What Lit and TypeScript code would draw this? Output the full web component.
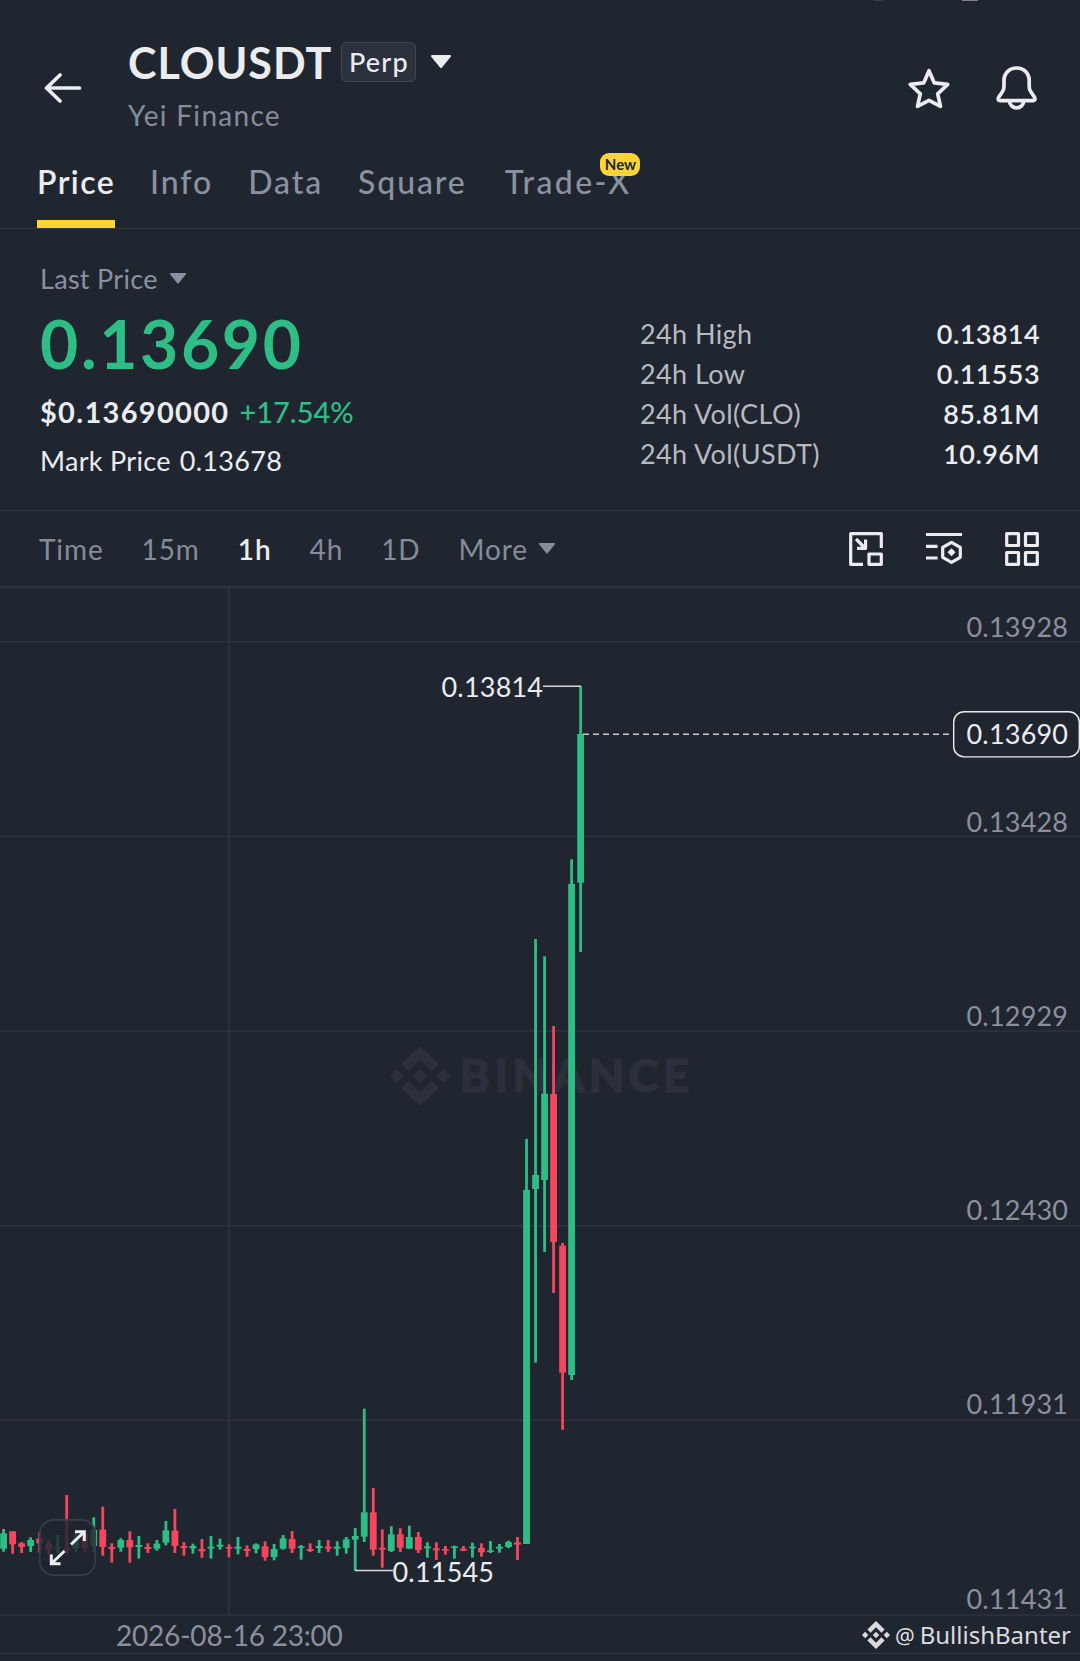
import { LitElement, css, html, svg } from 'lit'
import { customElement, property } from 'lit/decorators.js'

const logo = svg`<path d="M38.73 53.2l24.59-24.58 24.6 24.6 14.3-14.31L63.32 0l-38.9 38.9zM0 63.31l14.3-14.31 14.31 14.31-14.31 14.3zM38.73 73.41l24.59 24.59 24.6-24.6 14.31 14.29-38.9 38.91-38.91-38.88zM98 63.31l14.3-14.31 14.31 14.3-14.31 14.32zM77.83 63.3L63.32 48.78 48.81 63.28l14.51 14.5z" />`

type Candle = [dir: 'up' | 'down', high: number, low: number, top: number, bottom: number]

// wick and body edges in thirds of a pixel from BASE
const BASE = 814
const STEP = 9.016
const candles: Candle[] = [
  ['up', 387, 455, 400, 446],
  ['down', 394, 461, 394, 433],
  ['down', 426, 459, 430, 441],
  ['up', 412, 456, 420, 438],
  ['down', 397, 458, 416, 430],
  ['down', 418, 465, 432, 448],
  ['up', 405, 459, 440, 445],
  ['down', 285, 461, 444, 452],
  ['up', 400, 458, 415, 446],
  ['down', 390, 457, 402, 444],
  ['up', 352, 456, 390, 438],
  ['down', 320, 467, 389, 441],
  ['down', 430, 488, 441, 447],
  ['up', 415, 455, 420, 443],
  ['down', 394, 488, 420, 442],
  ['up', 408, 476, 435, 441],
  ['down', 430, 459, 441, 447],
  ['up', 420, 452, 431, 446],
  ['up', 363, 436, 391, 428],
  ['down', 327, 459, 392, 438],
  ['down', 426, 467, 438, 444],
  ['up', 431, 461, 438, 445],
  ['down', 417, 473, 447, 454],
  ['up', 408, 476, 440, 446],
  ['up', 416, 449, 434, 440],
  ['down', 433, 472, 441, 446],
  ['up', 411, 463, 440, 446],
  ['down', 436, 470, 447, 453],
  ['up', 430, 460, 433, 447],
  ['down', 424, 482, 439, 471],
  ['up', 432, 481, 447, 471],
  ['up', 405, 449, 415, 446],
  ['down', 393, 459, 417, 446],
  ['up', 435, 479, 439, 444],
  ['down', 430, 456, 447, 453],
  ['up', 420, 459, 438, 444],
  ['down', 420, 456, 440, 446],
  ['up', 424, 467, 440, 446],
  ['up', 411, 461, 418, 444],
  ['up', 384, 512, 408, 419],
  ['up', 26, 426, 337, 410],
  ['down', 264, 467, 337, 449],
  ['down', 388, 503, 443, 449],
  ['up', 379, 456, 403, 453],
  ['down', 385, 456, 403, 443],
  ['up', 377, 446, 411, 446],
  ['down', 396, 459, 411, 450],
  ['up', 427, 473, 439, 445],
  ['down', 427, 480, 445, 451],
  ['down', 438, 464, 447, 452],
  ['up', 437, 476, 439, 444],
  ['down', 438, 453, 446, 452],
  ['up', 428, 473, 440, 445],
  ['down', 430, 470, 444, 457],
  ['up', 423, 459, 451, 456],
  ['up', 432, 458, 440, 446],
  ['up', 422, 444, 426, 441],
  ['down', 411, 480, 427, 434],
  ['up', -783, 432, -630, 432],
  ['up', -1383, -112, -675, -633],
  ['up', -1331, -444, -919, -660],
  ['down', -1122, -321, -918, -474],
  ['down', -471, 89, -463, -82],
  ['up', -1622, -60, -1548, -75],
  ['up', -2142, -1344, -1998, -1552],
]

const axis = ['0.13928', '0.13428', '0.12929', '0.12430', '0.11931', '0.11431']

@customElement('price-chart')
export class PriceChart extends LitElement {
  private y(tick: number) {
    return BASE + tick / 3
  }

  private candle([dir, high, low, top, bottom]: Candle, index: number) {
    const x = 3.6 + index * STEP
    return svg`
      <g class=${dir}>
        <rect x=${x - 1.4} y=${this.y(high)} width="2.8" height=${(low - high) / 3} />
        <rect x=${x - 3.4} y=${this.y(top)} width="6.8" height=${(bottom - top) / 3} />
      </g>
    `
  }

  protected render() {
    return html`
      <svg viewBox="0 0 1080 1030" width="1080" height="1030">
        <rect class="grid" x="0" y="0" width="1080" height="2.5" />
        ${[55, 249.7, 444.3, 639, 833.6, 1028.4].map(
          (y) => svg`<rect class="grid" x="0" y=${y} width="1080" height="1.5" />`
        )}
        <rect class="grid" x="228" y="0" width="1.8" height="1029" />
        <g class="mark">
          <g transform="translate(390 460) scale(.474)">${logo}</g>
          <text x="459.5" y="506">BINANCE</text>
        </g>
        ${candles.map((c, i) => this.candle(c, i))}
        <path class="lead" d="M543 100.3h38M355 984.6h38" />
        <path class="last" d="M583 148.2h368" />
        <g class="label">
          <text x="441.5" y="110.5">0.13814</text>
          <text x="392.5" y="995.5">0.11545</text>
        </g>
        <g class="axis">
          ${axis.map((label, i) => svg`<text x="966.5" y=${51.3 + i * 194.25}>${label}</text>`)}
        </g>
        <rect class="tag" x="953.7" y="125.7" width="125.6" height="45.2" rx="10.5" />
        <text class="current" x="966.5" y="158.3">0.13690</text>
        <g class="expand">
          <rect x="39.8" y="933.8" width="55.4" height="55.4" rx="14" />
          <path d="M71 958.5 84 946M75 945.7h9.3v9.3M64.5 965 51.5 977.5M51.3 968.5v9.3h9.3" />
        </g>
      </svg>
    `
  }

  static styles = css`
    :host {
      display: block;
    }

    svg {
      display: block;
    }

    text {
      font-family: Lato, sans-serif;
      font-size: 27px;
      letter-spacing: 0.2px;
    }

    .grid {
      fill: #2d343f;
    }

    .up {
      fill: #2ebd85;
    }

    .down {
      fill: #f6465d;
    }

    .mark {
      fill: #2b303c;
    }

    .mark text {
      font-size: 46px;
      font-weight: 900;
      letter-spacing: 4.2px;
      stroke: #2b303c;
      stroke-width: 1;
    }

    .lead {
      stroke: #d5d8dc;
      stroke-width: 1.5;
    }

    .last {
      stroke: #c6c9ce;
      stroke-width: 1.6;
      stroke-dasharray: 6 4;
    }

    .label,
    .current {
      fill: #eaecef;
    }

    .axis {
      fill: #8b909c;
    }

    .tag {
      fill: #202630;
      stroke: #eaecef;
      stroke-width: 1.4;
    }

    .expand rect {
      fill: #202630;
      fill-opacity: 0.82;
      stroke: #373d49;
      stroke-width: 1.8;
    }

    .expand path {
      fill: none;
      stroke: #eaecef;
      stroke-width: 3;
    }
  `
}

@customElement('caret-down')
export class CaretDown extends LitElement {
  @property({ type: Number }) width = 18

  protected render() {
    return html`
      <svg viewBox="0 0 22 14" width=${this.width}>
        <path d="M2 1h18l-9 11z" />
      </svg>
    `
  }

  static styles = css`
    :host {
      display: flex;
    }

    path {
      fill: currentColor;
      stroke: currentColor;
      stroke-width: 2;
      stroke-linejoin: round;
    }
  `
}

@customElement('app-root')
export class AppRoot extends LitElement {
  private stats = [
    ['24h High', '0.13814'],
    ['24h Low', '0.11553'],
    ['24h Vol(CLO)', '85.81M'],
    ['24h Vol(USDT)', '10.96M'],
  ]

  protected render() {
    return html`
      <header>
        <svg class="back" viewBox="0 0 38 30" width="38" height="30">
          <path d="M35.5 15H2.5M16 2 2.5 15 16 28" />
        </svg>
        <div class="pair">
          <div class="symbol">
            <h1>CLOUSDT</h1>
            <span class="perp">Perp</span>
            <caret-down .width=${22}></caret-down>
          </div>
          <div class="project">Yei Finance</div>
        </div>
        <svg class="star" viewBox="908 68 42 42" width="42" height="42">
          <path d="M929 70.7 934.2 82.8 947.7 84.3 937.7 93.8 940.5 106.3 929 100.3 917.5 106.3 920.3 93.8 910.3 84.3 923.8 82.8z" />
        </svg>
        <svg class="bell" viewBox="996 66 42 44" width="42" height="44">
          <path d="M1016.6 68c-7.4 0-12.6 5.5-12.6 12.5v6q0 3-1.600 5.200l-3.400 5q-2 3.900 1 4h33.200q3-.1 1-4l-3.400-5q-1.600-2.200-1.600-5.200v-6c0-7-5.200-12.500-12.600-12.500zM1009.500 101a7.100 6.800 0 0 0 14.200 0" />
        </svg>
      </header>
      <nav>
        <a class="active">Price</a>
        <a>Info</a>
        <a>Data</a>
        <a>Square</a>
        <a class="trade">Trade-X<span class="new">New</span></a>
      </nav>
      <section class="ticker">
        <div class="quote">
          <div class="kind">Last Price <caret-down .width=${18}></caret-down></div>
          <div class="price">0.13690</div>
          <div class="fiat"><b>$0.13690000</b><span>+17.54%</span></div>
          <div class="index"><span>Mark Price</span><span>0.13678</span></div>
        </div>
        <dl>
          ${this.stats.map(
            ([name, value]) => html`
              <div>
                <dt>${name}</dt>
                <dd>${value}</dd>
              </div>
            `
          )}
        </dl>
      </section>
      <div class="toolbar">
        <span>Time</span>
        <span>15m</span>
        <span class="active">1h</span>
        <span>4h</span>
        <span>1D</span>
        <span class="more">More <caret-down .width=${18}></caret-down></span>
        <div class="tools">
          <svg viewBox="0 0 34 34" width="34" height="34">
            <path d="M32.3 16V1.7H1.7v30.6H14M20 22h12.3v10.3H20zM7 7l9 9M16.6 7.5v8.8H8" />
          </svg>
          <svg viewBox="0 0 36 34" width="36" height="34">
            <path d="M0 2.5h36M0 14.3h11.5M0 26h11.5M25.5 10.3l8.8 5v10l-8.8 5-8.8-5v-10z" />
            <path class="fill" d="m25.5 16.3 4 4-4 4-4-4z" />
          </svg>
          <svg viewBox="0 0 34 34" width="34" height="34">
            <path d="M1.7 1.7h11.8v11.8H1.7zM20.5 1.7h11.8v11.8H20.5zM1.7 20.5h11.8v11.8H1.7zM20.5 20.5h11.8v11.8H20.5z" />
          </svg>
        </div>
      </div>
      <price-chart></price-chart>
      <footer>
        <time>2026-08-16 23:00</time>
        <div class="author">
          <svg viewBox="0 0 126.6 126.6" width="28" height="28">${logo}</svg>
          <span class="at">@</span>
          <span>BullishBanter</span>
        </div>
      </footer>
    `
  }

  static styles = css`
    :host {
      display: block;
      width: 1080px;
      height: 1661px;
      overflow: hidden;
      background: #202630;
      color: #eaecef;
      font-family: Lato, sans-serif;
      font-size: 27px;
    }

    header {
      display: flex;
      height: 152px;
      box-sizing: border-box;
      padding: 42px 42px 0 44px;
      background:
        linear-gradient(#3a404b, #3a404b) 874px 0 / 9px 1px no-repeat,
        linear-gradient(#7d828b, #7d828b) 962px 0 / 16px 1px no-repeat;
    }

    header path {
      fill: none;
      stroke: #eaecef;
      stroke-width: 3.7;
      stroke-linecap: round;
      stroke-linejoin: round;
    }

    .back {
      margin-top: 31px;
    }

    .pair {
      flex: 1;
      margin-left: 46px;
    }

    .symbol {
      display: flex;
      align-items: center;
      height: 40px;
    }

    h1 {
      margin: 0;
      font-size: 43px;
      font-weight: 700;
      letter-spacing: 1px;
    }

    .perp {
      box-sizing: border-box;
      width: 75px;
      height: 40px;
      margin: 0 14px 0 9px;
      border: 1px solid #3f4551;
      border-radius: 5px;
      background: #2b313d;
      font-weight: 500;
      letter-spacing: 1.2px;
      line-height: 38px;
      text-align: center;
    }

    .project {
      margin-top: 15px;
      color: #868c99;
      font-size: 28px;
      letter-spacing: 1.3px;
      line-height: 36px;
    }

    .star {
      margin: 26px 46px 0 0;
    }

    .bell {
      margin-top: 24px;
    }

    nav {
      display: flex;
      gap: 35px;
      height: 76px;
      padding-left: 37px;
      border-bottom: 1px solid #333b47;
      color: #8b919e;
      font-size: 32px;
      font-weight: 500;
      letter-spacing: 1.9px;
      line-height: 59px;
    }

    nav a {
      position: relative;
      box-sizing: border-box;
      height: 76px;
    }

    nav .active {
      border-bottom: 8px solid #fcd535;
      color: #eaecef;
      font-weight: 600;
      letter-spacing: 1.4px;
    }

    nav .trade {
      margin-left: 3px;
      letter-spacing: 2.4px;
    }

    .new {
      position: absolute;
      top: 1px;
      right: -9px;
      width: 40px;
      border-radius: 9px;
      background: #fcd535;
      color: #202630;
      font-size: 15px;
      font-weight: 700;
      letter-spacing: 0;
      line-height: 23px;
      text-align: center;
    }

    .ticker {
      display: flex;
      justify-content: space-between;
      box-sizing: border-box;
      height: 282px;
      padding: 0 40px 0 40px;
      border-bottom: 1px solid #333b47;
    }

    .kind {
      display: flex;
      gap: 11px;
      align-items: center;
      margin-top: 34px;
      color: #8b919e;
      letter-spacing: 0.3px;
      line-height: 32px;
    }

    .price {
      margin-top: 15px;
      color: #2ebd85;
      font-size: 66px;
      font-weight: 700;
      letter-spacing: 2.6px;
      line-height: 68px;
    }

    .fiat {
      display: flex;
      gap: 10px;
      margin-top: 17px;
      font-size: 29px;
      line-height: 34px;
    }

    .fiat b {
      letter-spacing: 1.3px;
    }

    .fiat span {
      color: #2ebd85;
      font-weight: 500;
    }

    .index {
      display: flex;
      gap: 9px;
      margin-top: 15px;
      letter-spacing: 0.3px;
      line-height: 34px;
    }

    dl {
      width: 400px;
      margin: 85px 0 0;
    }

    dl div {
      display: flex;
      justify-content: space-between;
      letter-spacing: 0.4px;
      line-height: 40px;
    }

    dt {
      color: #b7bac0;
    }

    dd {
      margin: 0;
      font-weight: 600;
    }

    .toolbar {
      display: flex;
      gap: 38px;
      align-items: center;
      height: 75px;
      padding: 0 41px 0 39px;
      color: #868c99;
      font-size: 28px;
      letter-spacing: 0.9px;
    }

    .toolbar .active {
      color: #eaecef;
      font-weight: 600;
    }

    .more {
      display: flex;
      gap: 10px;
      align-items: center;
    }

    .tools {
      display: flex;
      gap: 43px;
      margin-left: auto;
    }

    .tools path {
      fill: none;
      stroke: #eaecef;
      stroke-width: 3.2;
      stroke-linejoin: round;
    }

    .tools .fill {
      fill: #eaecef;
      stroke: none;
    }

    footer {
      display: flex;
      justify-content: space-between;
      height: 37px;
      padding: 0 9px 0 116px;
      border-bottom: 1px solid #333b47;
      color: #8b909c;
      font-size: 28px;
      letter-spacing: -0.2px;
      line-height: 38px;
    }

    .author {
      display: flex;
      gap: 5px;
      align-items: center;
      color: #d9dbdd;
      font-family: 'Noto Sans', sans-serif;
      font-size: 24px;
      letter-spacing: 0;
    }

    .author svg {
      fill: #d9dbdd;
    }

    .at {
      font-size: 22px;
    }
  `
}
